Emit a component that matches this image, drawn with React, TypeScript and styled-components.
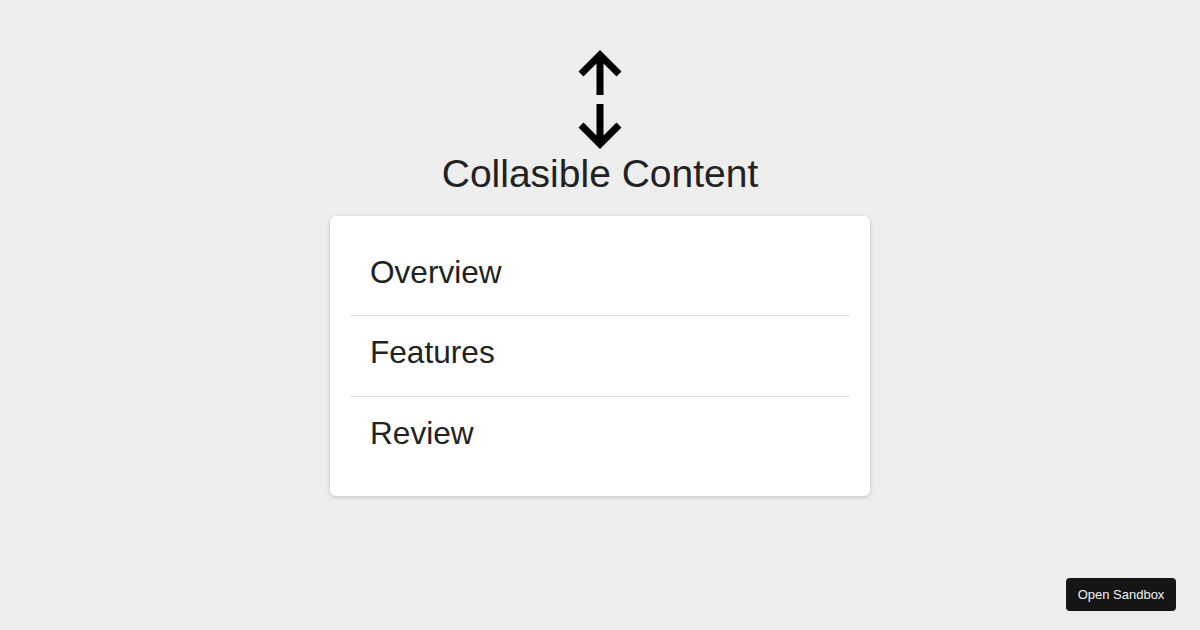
import styled, { createGlobalStyle } from "styled-components";

const GlobalStyle = createGlobalStyle`
    html, body {
        margin: 0;
        padding: 0;
        background: #eeeeee;
        font-family: "Liberation Sans", Arial, sans-serif;
        color: #222222;
    }
`;

const sections = ["Overview", "Features", "Review"];

function App() {
    return (
        <>
            <GlobalStyle />
            <Page>
                <ArrowIcon width="44" height="103" viewBox="0 0 44 103">
                    <path d="M3 26 L22 7 L41 26 M22 7 L22 47" />
                    <path d="M3 77 L22 96 L41 77 M22 96 L22 56" />
                </ArrowIcon>
                <Title>Collasible Content</Title>
                <Card>
                    {sections.map((s) => (
                        <Item key={s}>{s}</Item>
                    ))}
                </Card>
            </Page>
            <SandboxButton>Open Sandbox</SandboxButton>
        </>
    );
}

const Page = styled.main`
    display: flex;
    flex-direction: column;
    align-items: center;
    padding-top: 48px;
    min-height: 100vh;
    box-sizing: border-box;
`;

const ArrowIcon = styled.svg`
    display: block;
    fill: none;
    stroke: #000000;
    stroke-width: 7;
    stroke-linejoin: miter;
    stroke-linecap: butt;
`;

const Title = styled.h1`
    margin: 0;
    font-size: 39px;
    font-weight: normal;
    line-height: 46px;
    color: #222222;
`;

const Card = styled.section`
    margin-top: 19px;
    width: 540px;
    box-sizing: border-box;
    padding: 20px;
    background: #ffffff;
    border-radius: 6px;
    box-shadow: 0 1px 4px rgba(0, 0, 0, 0.2);
`;

const Item = styled.div`
    padding: 19px 20px 25px;
    font-size: 31.6px;
    line-height: 35px;
    color: #222222;
    border-bottom: 1px solid #dddddd;
    cursor: pointer;
    &:nth-child(2) {
        padding-bottom: 26px;
    }
    &:last-child {
        border-bottom: none;
    }
`;

const SandboxButton = styled.button`
    position: fixed;
    right: 24px;
    bottom: 19px;
    width: 110px;
    height: 33px;
    border: none;
    border-radius: 4px;
    background: #151515;
    color: #f2f2f2;
    font-family: "Liberation Sans", Arial, sans-serif;
    font-size: 13px;
`;

export default App;
